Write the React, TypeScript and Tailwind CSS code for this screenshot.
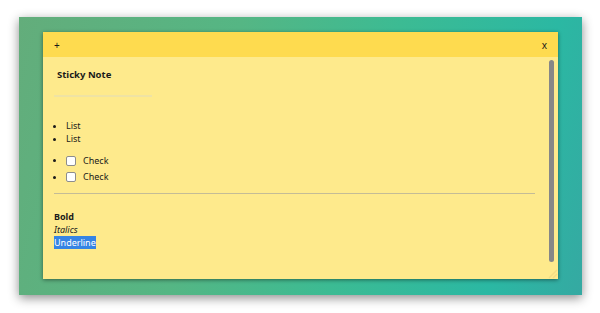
import React from "react";

export default function App() {
  return (
    <div className="w-[600px] h-[313px] bg-white pt-[17px] pl-[19px] font-['Noto_Sans',sans-serif] text-[9px] text-[#1a1a1a]">
      <div className="w-[563px] h-[278px] bg-[linear-gradient(105deg,#63ad7b_0%,#55b684_35%,#3cbb93_60%,#2bb8a3_85%,#35a9a2_100%)] shadow-[0_3px_10px_rgba(0,0,0,0.45)] pt-[15px] pl-[24px]">
        <div className="relative w-[515px] h-[247px] bg-[#feea8c] shadow-[0_1px_4px_rgba(0,0,0,0.45)] flex flex-col">
          <div className="h-[25px] bg-[#fedb4f] flex items-center justify-between px-[11px] text-[10px] leading-none">
            <span>+</span>
            <span>x</span>
          </div>
          <div className="flex-1 flex">
            <div className="flex-1 pl-[11px] pr-[14px]">
              <div className="pl-[3px] pt-[11px] font-bold text-[9.5px] leading-[14px]">Sticky Note</div>
              <div className="mt-[13px] w-[98px] h-[2px] bg-[#efe3a4]" />
              <ul className="mt-[22px] list-disc pl-[12px] leading-[13px]">
                <li>List</li>
                <li>List</li>
              </ul>
              <ul className="mt-[7px] list-disc pl-[12px] leading-[16px]">
                <li>
                  <span className="inline-flex items-center gap-[7px] align-middle">
                    <span className="inline-block w-[10px] h-[10px] bg-white border border-[#8d8d8d] rounded-[2px]" />
                    Check
                  </span>
                </li>
                <li>
                  <span className="inline-flex items-center gap-[7px] align-middle">
                    <span className="inline-block w-[10px] h-[10px] bg-white border border-[#8d8d8d] rounded-[2px]" />
                    Check
                  </span>
                </li>
              </ul>
              <div className="mt-[8px] h-[1px] bg-[#c4bc97]" />
              <div className="mt-[16px] leading-[13px]">
                <div className="font-bold">Bold</div>
                <div className="italic">Italics</div>
                <div>
                  <span className="bg-[#3584e4] text-white">Underline</span>
                </div>
              </div>
            </div>
            <div className="w-[9px] pt-[3px] pb-[16px] flex justify-start">
              <div className="w-[5px] h-[202px] rounded-full bg-[#878787]" />
            </div>
          </div>
          <svg className="absolute right-0 bottom-0" width="12" height="12" viewBox="0 0 12 12">
            <path d="M11 3 L3 11 M11 7 L7 11" stroke="#f3dc84" strokeWidth="1.5" />
          </svg>
        </div>
      </div>
    </div>
  );
}
